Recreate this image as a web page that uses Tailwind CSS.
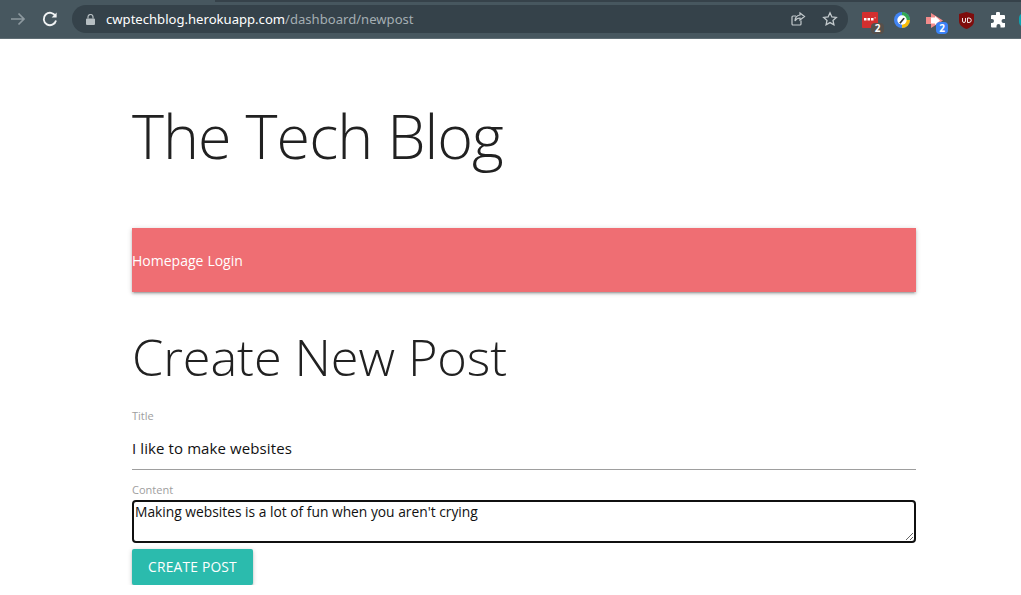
<!DOCTYPE html>
<html>
<head>
<meta charset="utf-8">
<script src="https://cdn.jsdelivr.net/npm/@tailwindcss/browser@4"></script>
</head>
<body class="bg-white font-['Open_Sans','Noto_Sans',sans-serif] text-[#212121] overflow-hidden">
<div class="h-[39px] bg-[#47575f] relative flex items-center border-b border-[#5f6d74]">
  <div class="absolute top-0 left-[215px] right-0 h-[2px] bg-[#36424a]"></div>
  <svg class="ml-[9px] w-[18px] h-[18px]" viewBox="0 0 18 18" fill="none" stroke="#8d999f" stroke-width="1.7"><path d="M2 9h13M9.5 3.500 15 9l-5.500 5.500"/></svg>
  <svg class="ml-[14px] w-[18px] h-[18px]" viewBox="0 0 18 18" fill="none" stroke="#f1f3f4" stroke-width="1.9"><path d="M14.500 6.200A6.200 6.200 0 1 0 15 10.500"/><path d="M15.600 2.400v5h-5z" fill="#f1f3f4" stroke="none"/></svg>
  <div class="ml-[13px] w-[776px] h-[28px] rounded-full bg-[#35424a] flex items-center">
    <svg class="ml-[14px] w-[9px] h-[11px]" viewBox="0 0 9 11" fill="#b6bec2"><path d="M1 4.500h7a1 1 0 0 1 1 1V10a1 1 0 0 1-1 1H1a1 1 0 0 1-1-1V5.500a1 1 0 0 1 1-1z"/><path d="M2 4.500V3a2.500 2.500 0 0 1 5 0v1.500" fill="none" stroke="#b6bec2" stroke-width="1.200"/></svg>
    <span class="ml-[11px] pt-[2px] text-[13.1px] font-['Noto_Sans',sans-serif] text-white">cwptechblog.herokuapp.com<span class="text-[#a4aeb3]">/dashboard/newpost</span></span>
    <svg class="ml-auto w-[16px] h-[16px]" viewBox="0 0 16 16" fill="none" stroke="#c3cacd" stroke-width="1.200"><path d="M11 9.500V13a1 1 0 0 1-1 1H3a1 1 0 0 1-1-1V6a1 1 0 0 1 1-1h3"/><path d="M10 2l4.500 3.500L10 9V7C7.500 7 6 8 5 10c0-3.500 2-5.500 5-6z"/></svg>
    <svg class="ml-[16px] mr-[10px] w-[16px] h-[16px]" viewBox="0 0 16 16" fill="none" stroke="#c3cacd" stroke-width="1.300"><path d="M8 1.800l1.900 4.100 4.400.5-3.300 3 .9 4.400L8 11.600l-3.900 2.200.9-4.400-3.300-3 4.400-.5z"/></svg>
  </div>
  <svg class="absolute left-[862px] top-[12px] w-[16px] h-[16px]" viewBox="0 0 16 16"><rect width="16" height="16" rx="1" fill="#d32f2f"/><rect x="2" y="6" width="2.500" height="2.500" fill="#fff"/><rect x="5.500" y="6" width="2.500" height="2.500" fill="#fff"/><rect x="9" y="6" width="2.500" height="2.500" fill="#fff"/><rect x="12.500" y="5" width="1.200" height="1.500" fill="#f3b0b0"/></svg>
  <div class="absolute left-[871px] top-[23px] w-[13px] h-[11px] bg-[#55504c] rounded-sm text-white text-[10px] leading-[11px] text-center font-bold">2</div>
  <svg class="absolute left-[894px] top-[12px] w-[16px] h-[16px]" viewBox="0 0 17 17"><circle cx="8.500" cy="8.500" r="8.500" fill="#4285f4"/><path d="M8.500 0a8.500 8.500 0 0 1 8.500 8.500H8.500z" fill="#34a853"/><path d="M17 8.500A8.500 8.500 0 0 1 8.500 17V8.500z" fill="#fbbc04"/><circle cx="8.500" cy="8.500" r="5" fill="#fff"/><path d="M5.500 11.500l4.500-5.500 1.500 1-4.500 5.500z" fill="#333"/></svg>
  <svg class="absolute left-[926px] top-[13px] w-[17px] h-[15px]" viewBox="0 0 17 15"><path d="M0 4h5V0l12 7.500L5 15v-4H0z" fill="#f28b8b"/><path d="M5 4.500h4V3l5 4.500L9 12v-1.500H5z" fill="#fff"/></svg>
  <div class="absolute left-[936px] top-[22px] w-[12px] h-[12px] bg-[#3b82f6] rounded-sm text-white text-[10px] leading-[12px] text-center font-bold">2</div>
  <svg class="absolute left-[959px] top-[12px] w-[15px] h-[17px]" viewBox="0 0 15 17"><path d="M7.500 0 15 2v7c0 4-3.500 6.500-7.500 8C3.500 15.500 0 13 0 9V2z" fill="#7f0d0d"/><path d="M3.500 6v3a1.500 1.500 0 0 0 3 0V6M8.500 6v4.500h1.500a2.200 2.200 0 0 0 0-4.500z" fill="none" stroke="#fff" stroke-width=".9"/></svg>
  <svg class="absolute left-[990px] top-[12px] w-[16px] h-[16px]" viewBox="0 0 16 16" fill="#fff"><path d="M6 1.500a2 2 0 0 1 4 0V3h4a1 1 0 0 1 1 1v3h-1.500a2 2 0 0 0 0 4H15v3.500a1 1 0 0 1-1 1h-3.500V14a2 2 0 0 0-4 0v1.500H2a1 1 0 0 1-1-1V11h1a2 2 0 0 0 0-4H1V4a1 1 0 0 1 1-1h4z"/></svg>
  <div class="absolute left-[1019px] top-[13px] w-[10px] h-[14px] rounded-full bg-[#0fa3b1]"></div>
</div>
<main class="mx-[132px] w-[784px]">
  <h1 class="mt-[55px] text-[61px] tracking-[-0.950px] leading-[84px] font-light">The Tech Blog</h1>
  <nav class="mt-[50px] h-[64px] bg-[#ef6e73] text-white flex items-center text-[14px] gap-[4px] shadow-[0_2px_2px_0_rgba(0,0,0,0.14),0_3px_1px_-2px_rgba(0,0,0,0.12),0_1px_5px_0_rgba(0,0,0,0.2)]"><a>Homepage</a><a>Login</a></nav>
  <h2 class="mt-[29px] text-[50.500px] tracking-[-0.100px] leading-[72px] font-light">Create New Post</h2>
  <form class="mt-[15px]">
    <label class="block text-[11px] leading-[16px] text-[#9e9e9e]">Title</label>
    <input value="I like to make websites" class="block w-full h-[43px] mt-[3px] text-[15px] tracking-[0.1px] text-[#111] border-b border-[#9e9e9e] outline-none">
    <label class="block mt-[12px] text-[11px] leading-[16px] text-[#9e9e9e]">Content</label>
    <textarea class="block mt-[2px] w-full h-[43px] border-2 border-[#101010] rounded-[4px] px-[1px] pt-0 text-[13.800px] leading-[19px] text-[#111] outline-none">Making websites is a lot of fun when you aren't crying</textarea>
    <button type="button" class="mt-[6px] h-[36px] w-[121px] rounded-[2px] bg-[#2bbbad] text-white text-[13.800px] tracking-[0.2px] shadow-[0_2px_2px_0_rgba(0,0,0,0.14),0_3px_1px_-2px_rgba(0,0,0,0.12),0_1px_5px_0_rgba(0,0,0,0.2)]">CREATE POST</button>
  </form>
</main>
</body>
</html>
